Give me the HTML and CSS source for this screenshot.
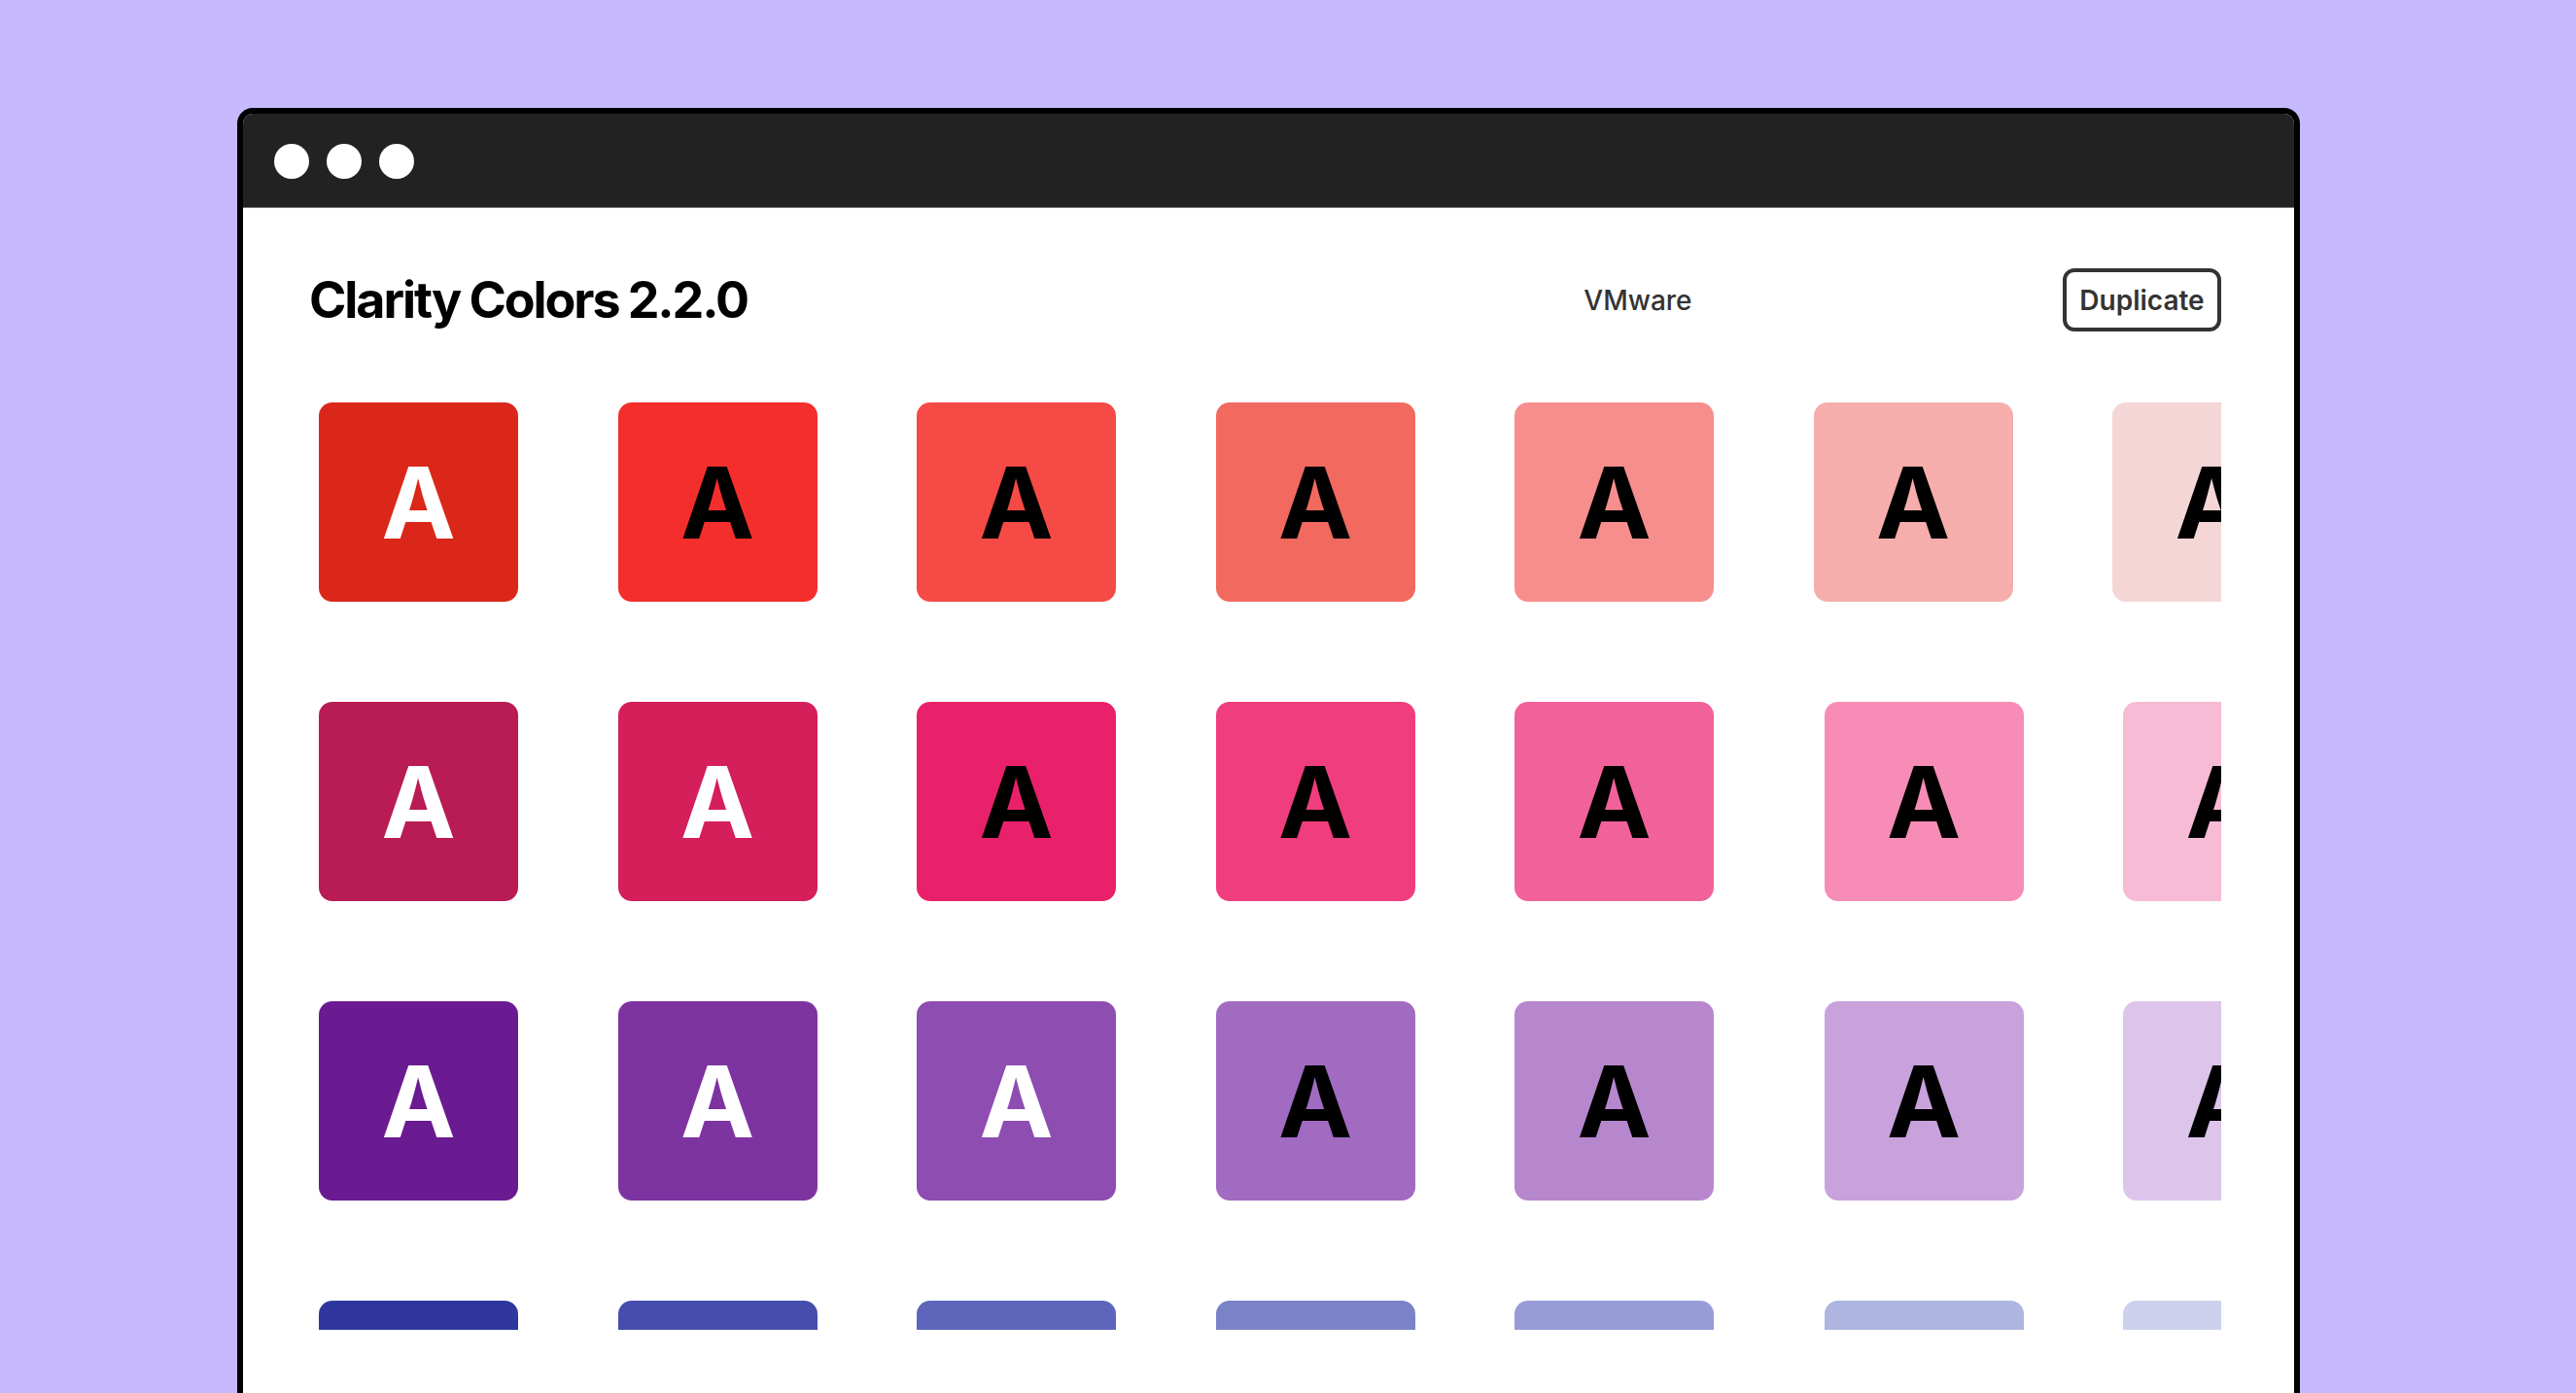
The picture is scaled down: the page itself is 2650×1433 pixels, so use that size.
FILE: index.html
```html
<!DOCTYPE html>
<html lang="en">
<head>
<meta charset="utf-8">
<title>Clarity Colors 2.2.0</title>
<link rel="stylesheet" href="styles.css">
</head>
<body>
<div class="window">
  <div class="titlebar">
    <span class="dot"></span><span class="dot"></span><span class="dot"></span>
  </div>
  <div class="content">
    <header class="header">
      <h1 class="title">Clarity Colors 2.2.0</h1>
      <div class="meta">
        <span class="author">VMware</span>
        <button class="btn">Duplicate</button>
      </div>
    </header>
    <div class="grid">
      <div class="row">
        <div class="tile light" style="background:#db2719">A</div>
        <div class="tile" style="background:#f32e2c">A</div>
        <div class="tile" style="background:#f54a45">A</div>
        <div class="tile" style="background:#f26960">A</div>
        <div class="tile" style="background:#f68e8d">A</div>
        <div class="tile" style="background:#f5aeab">A</div>
        <div class="tile" style="background:#f4d6d7">A</div>
      </div>
      <div class="row shifted">
        <div class="tile light" style="background:#b91b54">A</div>
        <div class="tile light" style="background:#d41f5b">A</div>
        <div class="tile" style="background:#e8216a">A</div>
        <div class="tile" style="background:#ef3d7e">A</div>
        <div class="tile" style="background:#f2629a">A</div>
        <div class="tile" style="background:#f78db6">A</div>
        <div class="tile" style="background:#f8bbd6">A</div>
      </div>
      <div class="row shifted">
        <div class="tile light" style="background:#6a1b91">A</div>
        <div class="tile light" style="background:#7e34a0">A</div>
        <div class="tile light" style="background:#8e4db0">A</div>
        <div class="tile" style="background:#a26bc2">A</div>
        <div class="tile" style="background:#b787cd">A</div>
        <div class="tile" style="background:#c9a2dc">A</div>
        <div class="tile" style="background:#dcc4ea">A</div>
      </div>
      <div class="row shifted">
        <div class="tile light" style="background:#2f379f">A</div>
        <div class="tile light" style="background:#464ead">A</div>
        <div class="tile light" style="background:#5d66ba">A</div>
        <div class="tile light" style="background:#7b83c8">A</div>
        <div class="tile" style="background:#979cd6">A</div>
        <div class="tile" style="background:#aeb5e0">A</div>
        <div class="tile" style="background:#cdd1ee">A</div>
      </div>
    </div>
  </div>
</div>
</body>
</html>
```
FILE: styles.css
```css
html, body {
  margin: 0;
  padding: 0;
  height: 100%;
}
body {
  background: #c6b9fe;
  overflow: hidden;
  font-family: Inter, "Noto Sans", sans-serif;
}
.window {
  box-sizing: border-box;
  width: 2122px;
  height: 1500px;
  margin: 111px 0 0 244px;
  border: 6px solid #000;
  border-bottom: none;
  border-radius: 16px 16px 0 0;
  background: #fff;
  overflow: hidden;
}
.titlebar {
  height: 97px;
  background: #222;
  border-bottom: 1px solid #777;
  display: flex;
  align-items: center;
  gap: 18px;
  padding: 2px 0 0 32px;
  box-sizing: border-box;
}
.dot {
  width: 36px;
  height: 36px;
  border-radius: 50%;
  background: #fff;
}
.content {
  padding: 0 75px 0 68px;
}
.header {
  display: grid;
  grid-template-columns: 2fr 1fr;
  align-items: center;
  padding-top: 62px;
}
.title {
  margin: 0;
  font-size: 52px;
  font-weight: 700;
  letter-spacing: -2.1px;
  word-spacing: -1px;
  color: #000;
  line-height: 1;
}
.meta {
  display: flex;
  align-items: center;
  justify-content: space-between;
}
.author {
  font-size: 28px;
  font-weight: 500;
  color: #333;
}
.btn {
  box-sizing: border-box;
  height: 65px;
  width: 163px;
  border: 4px solid #333;
  border-radius: 12px;
  background: #fff;
  font-family: Inter, "Noto Sans", sans-serif;
  font-size: 28px;
  font-weight: 600;
  color: #333;
  padding: 0;
}
.grid {
  margin: 73px 0 0 10px;
  height: 954px;
  overflow: hidden;
  display: flex;
  flex-direction: column;
  gap: 103px;
}
.row {
  display: flex;
  gap: 102.5px;
}
.shifted .tile:nth-child(6) {
  margin-left: 11px;
}
.tile {
  flex: 0 0 205px;
  height: 205px;
  border-radius: 14px;
  display: flex;
  align-items: center;
  justify-content: center;
  font-size: 102px;
  font-weight: 700;
  color: #000;
  line-height: 1;
}
.tile.light {
  color: #fff;
}
```
